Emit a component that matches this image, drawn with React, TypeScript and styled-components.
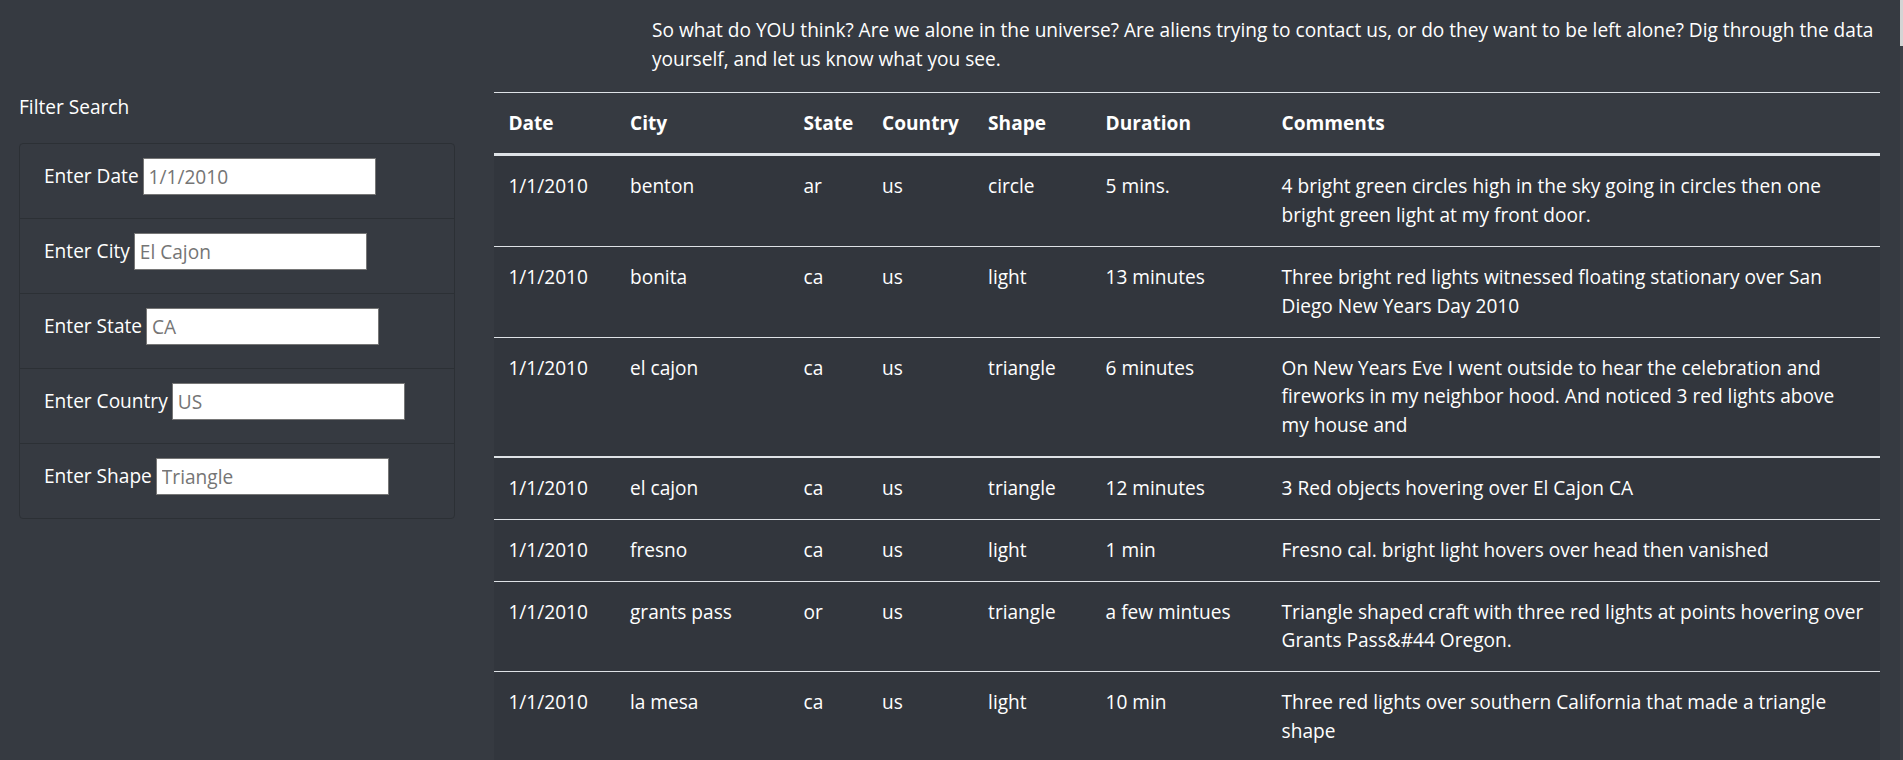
import React from 'react';
import styled, { createGlobalStyle } from 'styled-components';

const GlobalStyle = createGlobalStyle`
  html,
  body {
    margin: 0;
    padding: 0;
    overflow: hidden;
    background: #363a41;
  }

  body {
    font-family: 'Segoe UI', 'Open Sans', 'Liberation Sans', Arial, sans-serif;
    font-size: 19.1px;
    line-height: 28.8px;
    color: #fff;
  }

  * {
    box-sizing: border-box;
  }
`;

// Layout
const Page = styled.div`
  display: flex;
  align-items: flex-start;
  width: 1903px;
  min-height: 760px;
`;

const Sidebar = styled.aside`
  width: 471px;
  flex-shrink: 0;
  padding: 93px 16px 0 19px;
`;

const Main = styled.main`
  flex: 1;
  min-width: 0;
  padding: 16px 23px 0 23px;
`;

const Intro = styled.p`
  margin: 0 0 18px 158px;
`;

// Filter panel
const FilterTitle = styled.div`
  margin-bottom: 21px;
`;

const FilterList = styled.ul`
  list-style: none;
  margin: 0;
  padding: 0;
  width: 436px;
  border: 1px solid #2c3035;
  border-radius: 4px;
`;

const FilterItem = styled.li`
  display: flex;
  align-items: center;
  gap: 4px;
  padding: 14px 24px 23px 24px;

  & + & {
    border-top: 1px solid #2c3035;
  }
`;

const FilterLabel = styled.label`
  white-space: nowrap;
`;

const FilterInput = styled.input`
  width: 233px;
  height: 37px;
  padding: 1px 5px 0;
  border: 1px solid #767676;
  background: #fff;
  font: inherit;
  color: #333;

  &::placeholder {
    color: #757575;
    opacity: 1;
  }
`;

// Table
const Table = styled.table`
  width: 100%;
  table-layout: fixed;
  border-collapse: collapse;
  color: #fff;
`;

const HeadCell = styled.th`
  padding: 16px 14.4px 16px;
  text-align: left;
  font-weight: 700;
  border-top: 1px solid #dee2e6;
  border-bottom: 3px solid #dee2e6;
`;

const Body = styled.tbody`
  background: #32363d;
`;

const Row = styled.tr<{ $thick?: boolean }>`
  border-bottom: ${(p) => (p.$thick ? '2px' : '1px')} solid #dee2e6;
`;

const Cell = styled.td`
  padding: 16px 14.4px;
  vertical-align: top;
`;

const ScrollTrack = styled.div`
  position: fixed;
  top: 0;
  right: 0;
  width: 3px;
  height: 100%;
  background: #3d4148;

  &::before {
    content: '';
    display: block;
    height: 46px;
    background: #d4d4d4;
  }
`;

const filters = [
  { label: 'Enter Date', placeholder: '1/1/2010' },
  { label: 'Enter City', placeholder: 'El Cajon' },
  { label: 'Enter State', placeholder: 'CA' },
  { label: 'Enter Country', placeholder: 'US' },
  { label: 'Enter Shape', placeholder: 'Triangle' },
];

const columns = [
  { title: 'Date', width: 121.6 },
  { title: 'City', width: 173.5 },
  { title: 'State', width: 78.6 },
  { title: 'Country', width: 106 },
  { title: 'Shape', width: 117.5 },
  { title: 'Duration', width: 176 },
  { title: 'Comments' },
];

const sightings = [
  ['1/1/2010', 'benton', 'ar', 'us', 'circle', '5 mins.', '4 bright green circles high in the sky going in circles then one bright green light at my front door.'],
  ['1/1/2010', 'bonita', 'ca', 'us', 'light', '13 minutes', 'Three bright red lights witnessed floating stationary over San Diego New Years Day 2010'],
  ['1/1/2010', 'el cajon', 'ca', 'us', 'triangle', '6 minutes', 'On New Years Eve I went outside to hear the celebration and fireworks in my neighbor hood. And noticed 3 red lights above my house and'],
  ['1/1/2010', 'el cajon', 'ca', 'us', 'triangle', '12 minutes', '3 Red objects hovering over El Cajon CA'],
  ['1/1/2010', 'fresno', 'ca', 'us', 'light', '1 min', 'Fresno cal. bright light hovers over head then vanished'],
  ['1/1/2010', 'grants pass', 'or', 'us', 'triangle', 'a few mintues', 'Triangle shaped craft with three red lights at points hovering over Grants Pass&#44 Oregon.'],
  ['1/1/2010', 'la mesa', 'ca', 'us', 'light', '10 min', 'Three red lights over southern California that made a triangle shape'],
];

const App: React.FC = () => {
  return (
    <>
      <GlobalStyle />
      <Page>
        <Sidebar>
          <FilterTitle>Filter Search</FilterTitle>
          <FilterList>
            {filters.map((f) => (
              <FilterItem key={f.label}>
                <FilterLabel>{f.label}</FilterLabel>
                <FilterInput type="text" placeholder={f.placeholder} />
              </FilterItem>
            ))}
          </FilterList>
        </Sidebar>
        <Main>
          <Intro>
            So what do YOU think? Are we alone in the universe? Are aliens trying to contact us, or do they
            want to be left alone? Dig through the data yourself, and let us know what you see.
          </Intro>
          <Table>
            <colgroup>
              {columns.map((c) => (
                <col key={c.title} style={c.width ? { width: c.width } : undefined} />
              ))}
            </colgroup>
            <thead>
              <tr>
                {columns.map((c) => (
                  <HeadCell key={c.title}>{c.title}</HeadCell>
                ))}
              </tr>
            </thead>
            <Body>
              {sightings.map((row, i) => (
                <Row key={i} $thick={i === 2}>
                  {row.map((value, j) => (
                    <Cell key={j}>{value}</Cell>
                  ))}
                </Row>
              ))}
            </Body>
          </Table>
        </Main>
      </Page>
      <ScrollTrack />
    </>
  );
};

export default App;
